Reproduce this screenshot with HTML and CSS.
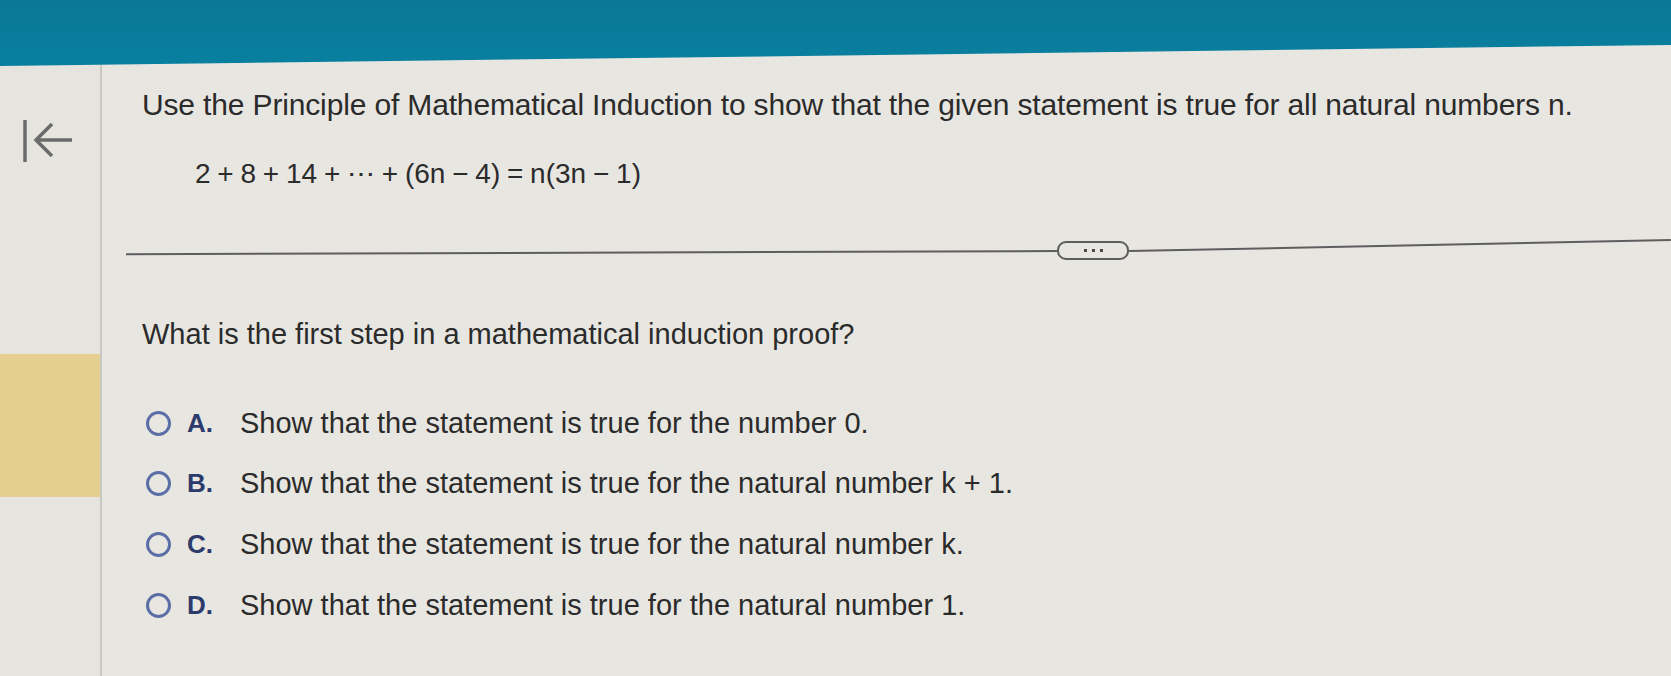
FILE: index.html
```html
<!DOCTYPE html>
<html>
<head>
<meta charset="utf-8">
<link rel="stylesheet" href="styles.css">
</head>
<body>
<div class="page">
  <div class="topbar"></div>
  <div class="main">
    <aside class="sidebar">
      <div class="back">
        <svg width="52" height="46" viewBox="0 0 52 46">
          <line x1="3" y1="2" x2="3" y2="44" stroke="#6b6b6b" stroke-width="3.5"/>
          <line x1="14" y1="22" x2="50" y2="22" stroke="#6b6b6b" stroke-width="3.5"/>
          <polyline points="30,6 14,22 30,38" fill="none" stroke="#6b6b6b" stroke-width="3.5"/>
        </svg>
      </div>
      <div class="side-highlight"></div>
    </aside>
    <section class="content">
      <p class="title">Use the Principle of Mathematical Induction to show that the given statement is true for all natural numbers n.</p>
      <p class="equation">2 + 8 + 14 + ⋯ + (6n − 4) = n(3n − 1)</p>
      <div class="divider">
        <div class="rule rule-left"></div>
        <div class="pill"><span></span><span></span><span></span></div>
        <div class="rule rule-right"></div>
      </div>
      <p class="question">What is the first step in a mathematical induction proof?</p>
      <ul class="options">
        <li><span class="radio"></span><span class="letter">A.</span><span class="text">Show that the statement is true for the number 0.</span></li>
        <li><span class="radio"></span><span class="letter">B.</span><span class="text">Show that the statement is true for the natural number k + 1.</span></li>
        <li><span class="radio"></span><span class="letter">C.</span><span class="text">Show that the statement is true for the natural number k.</span></li>
        <li><span class="radio"></span><span class="letter">D.</span><span class="text">Show that the statement is true for the natural number 1.</span></li>
      </ul>
    </section>
  </div>
</div>
</body>
</html>
```
FILE: styles.css
```css
html, body {
  margin: 0;
  padding: 0;
}
body {
  width: 1671px;
  height: 676px;
  overflow: hidden;
  background: #e8e6e1;
  font-family: "Liberation Sans", Arial, sans-serif;
  color: #2b2b2b;
}
.page {
  position: relative;
  width: 1671px;
  height: 676px;
}
.topbar {
  position: absolute;
  left: 0;
  top: 0;
  width: 1671px;
  height: 68px;
  background: linear-gradient(#0a7896, #0980a0);
  clip-path: polygon(0 0, 100% 0, 100% 45px, 0 66px);
  z-index: 2;
}
.main {
  display: flex;
  padding-top: 64px;
  height: 612px;
}
.sidebar {
  width: 100px;
  flex: none;
  border-right: 2px solid #c9c7c2;
  background: #e6e4df;
  display: flex;
  flex-direction: column;
}
.back {
  padding: 54px 0 0 22px;
  height: 46px;
}
.side-highlight {
  margin-top: 190px;
  height: 143px;
  background: #e5cf90;
}
.content {
  flex: 1;
  padding-left: 40px;
}
.title {
  margin: 24px 0 0;
  font-size: 30px;
  line-height: 34px;
  letter-spacing: -0.15px;
}
.equation {
  margin: 36px 0 0 53px;
  font-size: 28px;
  line-height: 32px;
  word-spacing: -1px;
}
.divider {
  margin: 51px 0 0 -16px;
  display: flex;
  align-items: center;
}
.rule {
  height: 2px;
  background: #5e5e5e;
}
.rule-left {
  width: 931px;
  transform: rotate(-0.2deg);
  transform-origin: right center;
}
.rule-right {
  flex: 1;
  transform: rotate(-1.15deg);
  transform-origin: left center;
}
.pill {
  width: 68px;
  height: 15px;
  border: 2px solid #5e5e5e;
  border-radius: 9px;
  display: flex;
  justify-content: center;
  align-items: center;
  gap: 5px;
  flex: none;
}
.pill span {
  width: 3px;
  height: 3px;
  background: #4a4a4a;
}
.question {
  margin: 57px 0 0;
  font-size: 29px;
  line-height: 34px;
}
.options {
  list-style: none;
  margin: 55px 0 0;
  padding: 0;
  display: flex;
  flex-direction: column;
  gap: 26.7px;
}
.options li {
  display: flex;
  align-items: center;
  height: 34px;
  font-size: 29px;
}
.radio {
  width: 19px;
  height: 19px;
  border: 3px solid #5b6ea6;
  border-radius: 50%;
  margin-left: 4px;
  flex: none;
}
.letter {
  margin-left: 16px;
  width: 53px;
  color: #2d3a6c;
  font-weight: bold;
  font-size: 26px;
}
.text {
  color: #2b2b2b;
}
```
